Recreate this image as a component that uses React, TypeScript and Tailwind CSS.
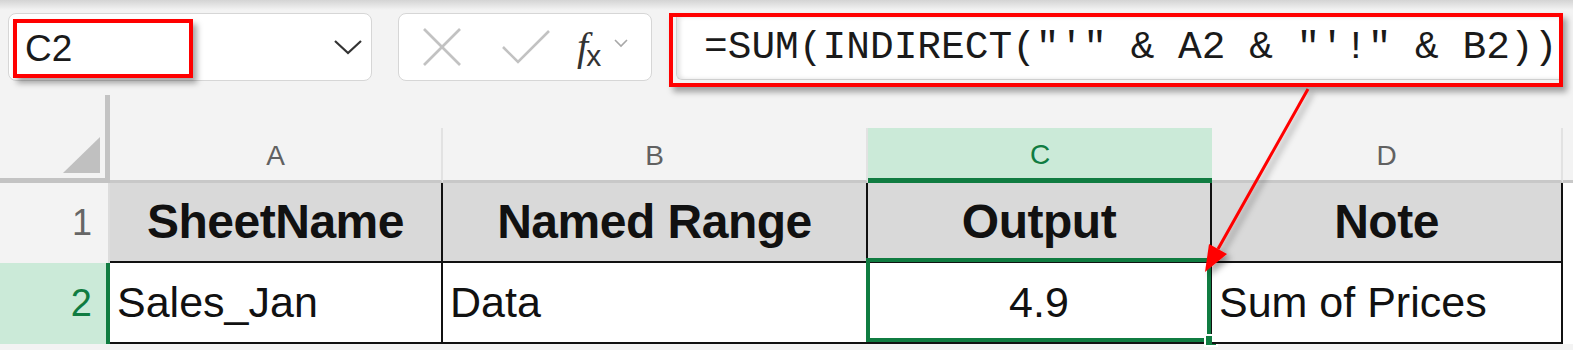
import React from 'react';

const cols = [
  { key: 'A', w: 'w-[333px]', head: 'SheetName', val: 'Sales_Jan', align: 'left' },
  { key: 'B', w: 'w-[425px]', head: 'Named Range', val: 'Data', align: 'left' },
  { key: 'C', w: 'w-[344px]', head: 'Output', val: '4.9', align: 'center' },
  { key: 'D', w: 'w-[351px]', head: 'Note', val: 'Sum of Prices', align: 'left' },
];

const App = () => {
  return (
    <div className="relative w-[1573px] h-[350px] overflow-hidden bg-[#f3f3f3] font-['Liberation_Sans',Arial,sans-serif]">
      {/* top shadow from the ribbon */}
      <div className="h-[10px] bg-gradient-to-b from-[#d4d4d4] to-[#f3f3f3]" />

      {/* formula bar */}
      <div className="flex items-start mt-[3px] h-[74px]">
        {/* name box */}
        <div className="ml-[8px] w-[364px] h-[68px] rounded-[8px] border border-[#d6d6d6] bg-white flex items-start">
          <div className="ml-[4px] mt-[5px] w-[180px] h-[59px] border-4 border-[#ff0000] shadow-[4px_5px_6px_rgba(0,0,0,0.35)] flex items-center pl-[8px]">
            <span className="text-[37px] leading-none text-[#1a1a1a]">C2</span>
          </div>
          <svg className="ml-auto mr-[9px] self-center" width="28" height="16" viewBox="0 0 28 16">
            <polyline points="1,2 14,14 27,2" fill="none" stroke="#333" strokeWidth="2.2" />
          </svg>
        </div>

        {/* cancel / enter / fx */}
        <div className="ml-[26px] w-[254px] h-[68px] rounded-[8px] border border-[#d6d6d6] bg-white flex items-center">
          <svg className="ml-[24px]" width="38" height="38" viewBox="0 0 38 38">
            <line x1="1" y1="1" x2="37" y2="37" stroke="#c2c2c2" strokeWidth="2.6" />
            <line x1="37" y1="1" x2="1" y2="37" stroke="#c2c2c2" strokeWidth="2.6" />
          </svg>
          <svg className="ml-[41px]" width="48" height="34" viewBox="0 0 48 34">
            <polyline points="1,17 16,32 47,1" fill="none" stroke="#c2c2c2" strokeWidth="2.6" />
          </svg>
          <div className="ml-[27px] flex items-end text-[#333] leading-none">
            <span className="font-['Liberation_Serif',serif] italic text-[40px]">f</span>
            <span className="text-[30px] -ml-[2px] mb-[-4px]">x</span>
          </div>
          <svg className="ml-[13px] mt-[-8px]" width="14" height="9" viewBox="0 0 14 9">
            <polyline points="1,1 7,7 13,1" fill="none" stroke="#a8a8a8" strokeWidth="1.6" />
          </svg>
        </div>

        {/* formula box */}
        <div className="ml-[17px] w-[894px] h-[74px] border-4 border-[#ff0000] bg-[#f3f3f3] pl-[3px] pb-[3px] shadow-[4px_5px_6px_rgba(0,0,0,0.35)]">
          <div className="h-full bg-white rounded-bl-[6px] border-l border-b border-[#cfcfcf] shadow-[inset_3px_0_4px_rgba(0,0,0,0.12)] flex items-center pl-[27px] overflow-hidden">
            <span className="font-['Liberation_Mono',monospace] text-[39.5px] leading-none text-[#1a1a1a] whitespace-pre">
              =SUM(INDIRECT("'" &amp; A2 &amp; "'!" &amp; B2))
            </span>
          </div>
        </div>
      </div>

      {/* grid */}
      <div className="mt-[8px]">
        {/* column header row */}
        <div className="flex h-[88px]">
          <div className="relative w-[110px] h-full border-r-[5px] border-b-[5px] border-[#c3c3c3]">
            <svg className="absolute left-[63px] top-[42px]" width="37" height="36" viewBox="0 0 37 36">
              <polygon points="37,0 37,36 0,36" fill="#c0c0c0" />
            </svg>
          </div>
          {cols.map((c) => (
            <div key={c.key} className={`${c.w} flex flex-col`}>
              <div className="h-[33px]" />
              {c.key === 'C' ? (
                <div className="h-[55px] bg-[#cbead8] border-b-[5px] border-[#107c41] flex items-center justify-center text-[28px] text-[#107c41] pt-[3px]">
                  C
                </div>
              ) : (
                <div className="h-[55px] border-r-2 border-[#e2e2e2] border-b-[3px] border-b-[#c8c8c8] flex items-center justify-center text-[28px] text-[#616161] pt-[3px]">
                  {c.key}
                </div>
              )}
            </div>
          ))}
          <div className="flex-1 flex flex-col">
            <div className="h-[33px]" />
            <div className="h-[55px] border-b-[3px] border-[#c8c8c8]" />
          </div>
        </div>

        {/* row 1 */}
        <div className="flex h-[80px]">
          <div className="w-[110px] h-full border-r-2 border-[#dcdcdc] flex items-center justify-end pr-[16px] text-[36px] text-[#666]">
            1
          </div>
          {cols.map((c) => (
            <div
              key={c.key}
              className={`${c.w} h-full bg-[#d9d9d9] border-r-2 border-b-2 border-[#111] flex items-center justify-center font-bold text-[48px] text-[#111] tracking-[-0.5px]`}
            >
              {c.head}
            </div>
          ))}
          <div className="flex-1 bg-white" />
        </div>

        {/* row 2 */}
        <div className="flex h-[81px]">
          <div className="w-[110px] h-full bg-[#cbead8] border-r-4 border-[#107c41] flex items-center justify-end pr-[14px] text-[38px] text-[#107c41]">
            2
          </div>
          {cols.map((c) => (
            <div
              key={c.key}
              className={`${c.w} relative h-full bg-white border-r-2 border-b-2 border-[#111] flex items-center text-[43px] text-[#111] ${
                c.align === 'center' ? 'justify-center' : 'justify-start pl-[7px]'
              }`}
            >
              {c.val}
              {c.key === 'C' && (
                <>
                  <div className="absolute -top-[5px] -left-[2px] -right-[1px] bottom-0 border-4 border-[#107c41]" />
                  <div className="absolute -right-[8px] -bottom-[5px] w-[14px] h-[13px] bg-[#107c41] border-2 border-white" />
                </>
              )}
            </div>
          ))}
          <div className="flex-1 bg-white" />
        </div>
      </div>

      {/* annotation arrow */}
      <svg className="absolute inset-0 pointer-events-none" width="1573" height="350" viewBox="0 0 1573 350">
        <defs>
          <filter id="sh" x="-20%" y="-20%" width="140%" height="140%">
            <feDropShadow dx="4" dy="4" stdDeviation="3" floodColor="#000" floodOpacity="0.35" />
          </filter>
        </defs>
        <g filter="url(#sh)">
          <line x1="1308" y1="89" x2="1218" y2="249" stroke="#ff0000" strokeWidth="3" />
          <polygon points="1205,272 1227,254 1209,244" fill="#ff0000" />
        </g>
      </svg>
    </div>
  );
};

export default App;
